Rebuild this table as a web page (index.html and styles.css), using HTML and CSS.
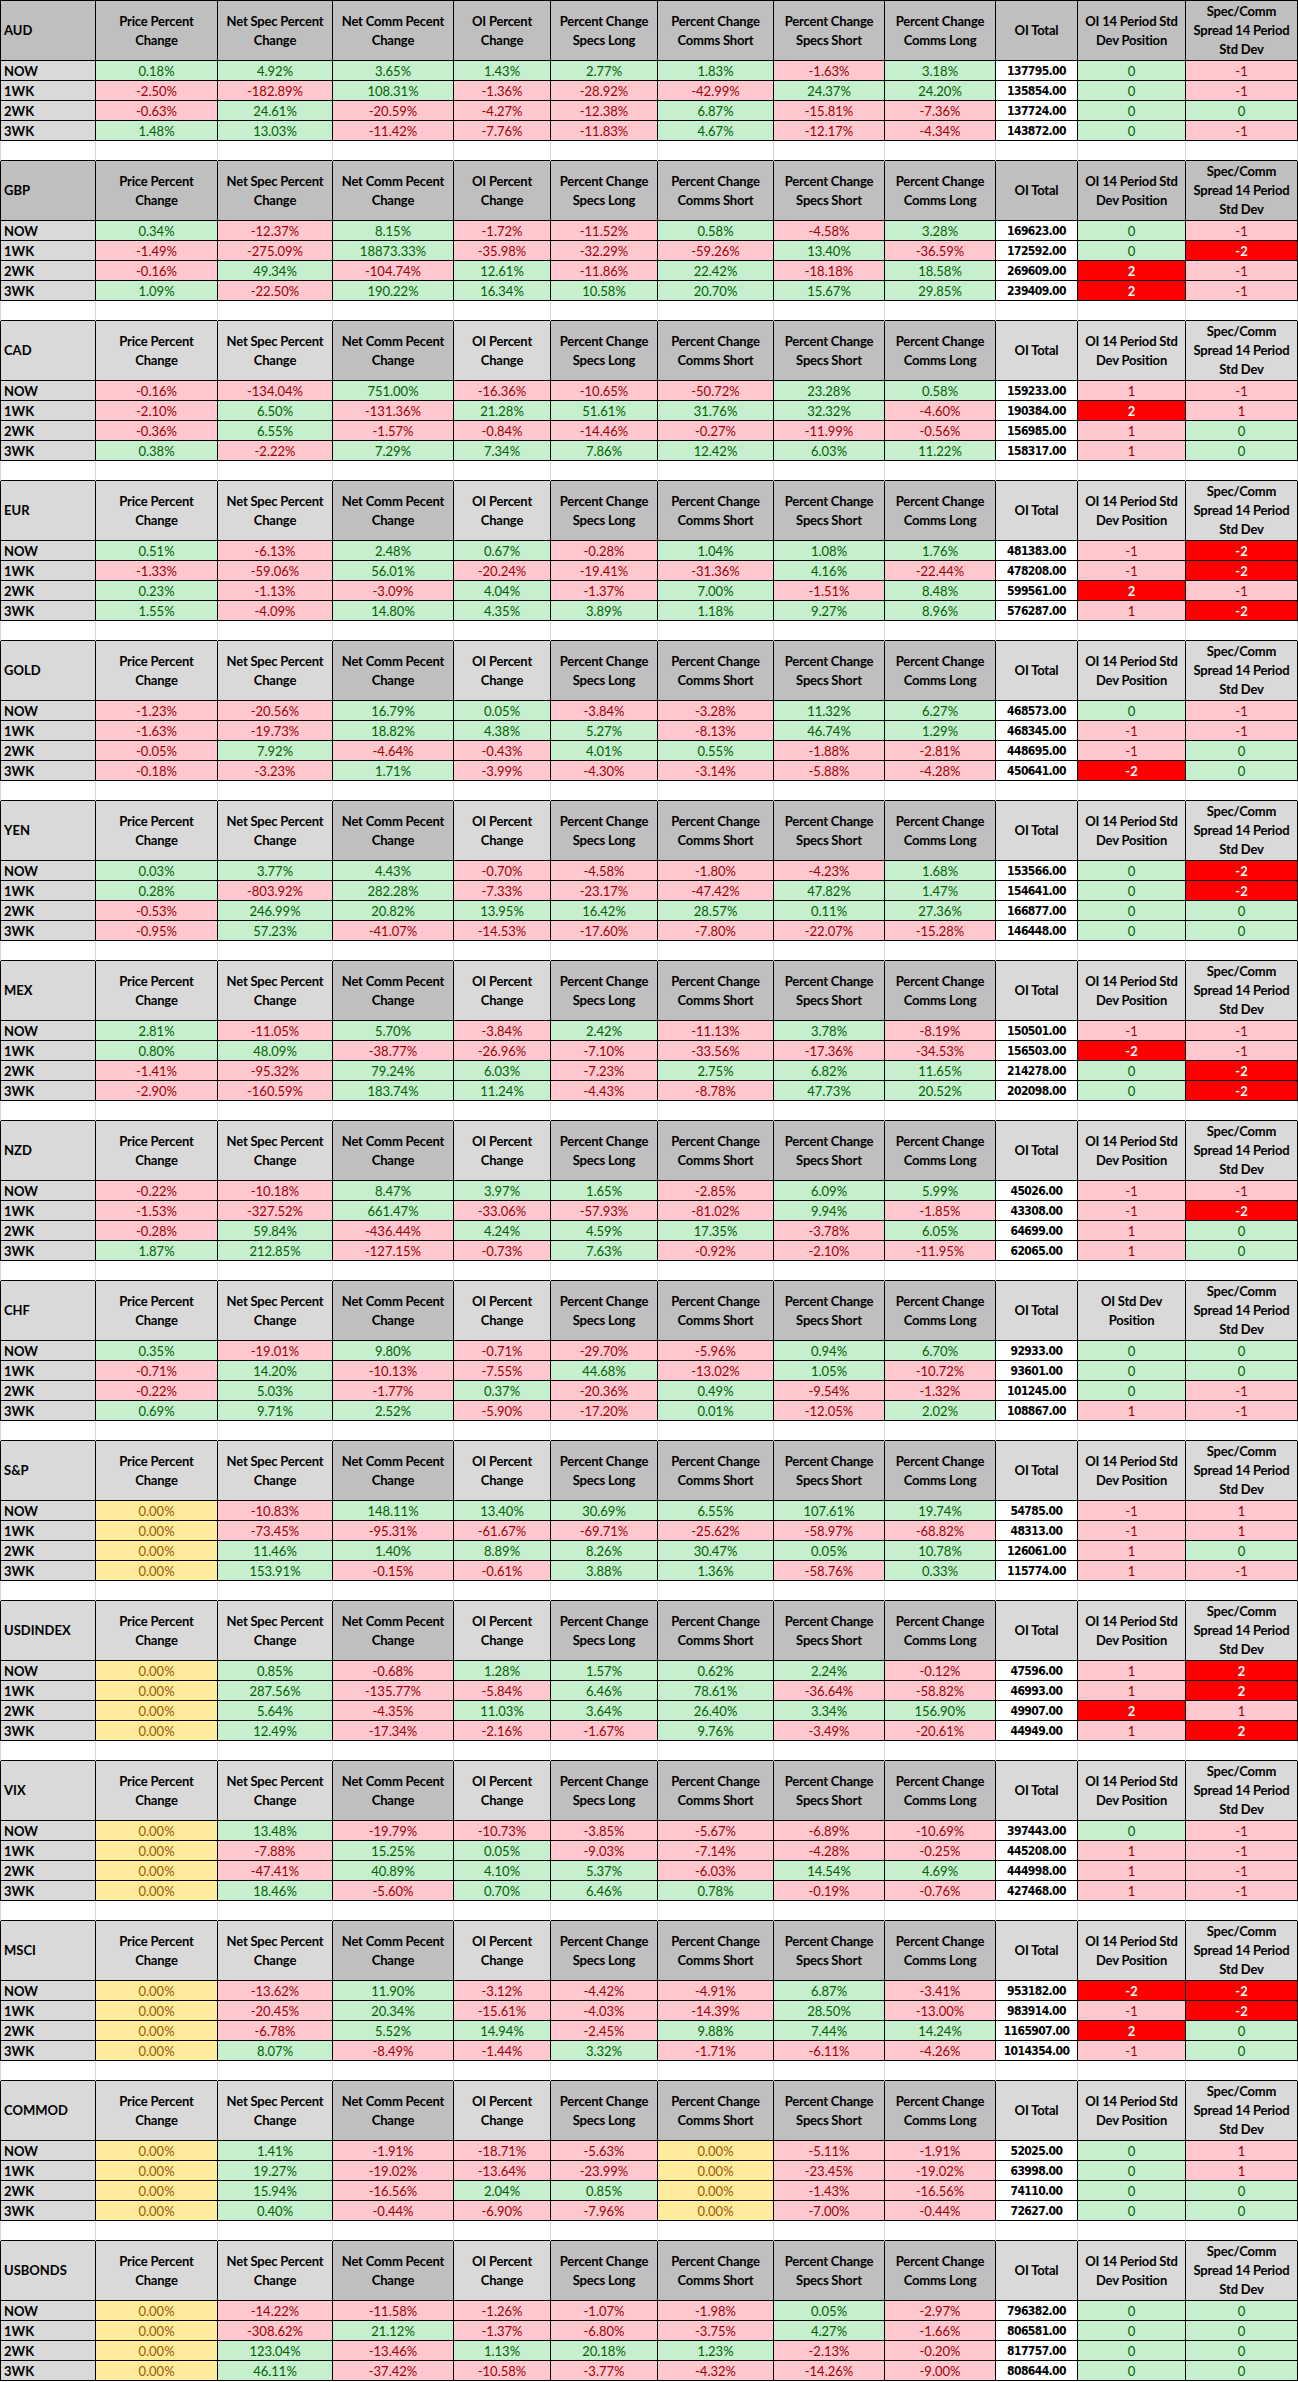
FILE: index.html
```html
<!DOCTYPE html>
<html lang="en">
<head>
<meta charset="utf-8">
<title>COT Percent Change Table</title>
<link rel="stylesheet" href="styles.css">
</head>
<body>
<table class="cot">
<colgroup>
<col class="c0"><col class="c1"><col class="c2"><col class="c3"><col class="c4"><col class="c5"><col class="c6"><col class="c7"><col class="c8"><col class="c9"><col class="c10"><col class="c11">
</colgroup>
<tbody>
<!-- AUD -->
<tr class="hd all"><th class="lb">AUD</th><th>Price Percent<br>Change</th><th>Net Spec Percent<br>Change</th><th>Net Comm Pecent<br>Change</th><th>OI Percent<br>Change</th><th>Percent Change<br>Specs Long</th><th>Percent Change<br>Comms Short</th><th>Percent Change<br>Specs Short</th><th>Percent Change<br>Comms Long</th><th>OI Total</th><th>OI 14 Period Std<br>Dev Position</th><th>Spec/Comm<br>Spread 14 Period<br>Std Dev</th></tr>
<tr class="dr"><td class="l">NOW</td><td class="g">0.18%</td><td class="g">4.92%</td><td class="g">3.65%</td><td class="g">1.43%</td><td class="g">2.77%</td><td class="g">1.83%</td><td class="r">-1.63%</td><td class="g">3.18%</td><td class="n">137795.00</td><td class="g">0</td><td class="r">-1</td></tr>
<tr class="dr"><td class="l">1WK</td><td class="r">-2.50%</td><td class="r">-182.89%</td><td class="g">108.31%</td><td class="r">-1.36%</td><td class="r">-28.92%</td><td class="r">-42.99%</td><td class="g">24.37%</td><td class="g">24.20%</td><td class="n">135854.00</td><td class="g">0</td><td class="r">-1</td></tr>
<tr class="dr"><td class="l">2WK</td><td class="r">-0.63%</td><td class="g">24.61%</td><td class="r">-20.59%</td><td class="r">-4.27%</td><td class="r">-12.38%</td><td class="g">6.87%</td><td class="r">-15.81%</td><td class="r">-7.36%</td><td class="n">137724.00</td><td class="g">0</td><td class="g">0</td></tr>
<tr class="dr"><td class="l">3WK</td><td class="g">1.48%</td><td class="g">13.03%</td><td class="r">-11.42%</td><td class="r">-7.76%</td><td class="r">-11.83%</td><td class="g">4.67%</td><td class="r">-12.17%</td><td class="r">-4.34%</td><td class="n">143872.00</td><td class="g">0</td><td class="r">-1</td></tr>
<tr class="sp"><td></td><td></td><td></td><td></td><td></td><td></td><td></td><td></td><td></td><td></td><td></td><td></td></tr>
<!-- GBP -->
<tr class="hd all"><th class="lb">GBP</th><th>Price Percent<br>Change</th><th>Net Spec Percent<br>Change</th><th>Net Comm Pecent<br>Change</th><th>OI Percent<br>Change</th><th>Percent Change<br>Specs Long</th><th>Percent Change<br>Comms Short</th><th>Percent Change<br>Specs Short</th><th>Percent Change<br>Comms Long</th><th>OI Total</th><th>OI 14 Period Std<br>Dev Position</th><th>Spec/Comm<br>Spread 14 Period<br>Std Dev</th></tr>
<tr class="dr"><td class="l">NOW</td><td class="g">0.34%</td><td class="r">-12.37%</td><td class="g">8.15%</td><td class="r">-1.72%</td><td class="r">-11.52%</td><td class="g">0.58%</td><td class="r">-4.58%</td><td class="g">3.28%</td><td class="n">169623.00</td><td class="g">0</td><td class="r">-1</td></tr>
<tr class="dr"><td class="l">1WK</td><td class="r">-1.49%</td><td class="r">-275.09%</td><td class="g">18873.33%</td><td class="r">-35.98%</td><td class="r">-32.29%</td><td class="r">-59.26%</td><td class="g">13.40%</td><td class="r">-36.59%</td><td class="n">172592.00</td><td class="g">0</td><td class="x">-2</td></tr>
<tr class="dr"><td class="l">2WK</td><td class="r">-0.16%</td><td class="g">49.34%</td><td class="r">-104.74%</td><td class="g">12.61%</td><td class="r">-11.86%</td><td class="g">22.42%</td><td class="r">-18.18%</td><td class="g">18.58%</td><td class="n">269609.00</td><td class="x">2</td><td class="r">-1</td></tr>
<tr class="dr"><td class="l">3WK</td><td class="g">1.09%</td><td class="r">-22.50%</td><td class="g">190.22%</td><td class="g">16.34%</td><td class="g">10.58%</td><td class="g">20.70%</td><td class="g">15.67%</td><td class="g">29.85%</td><td class="n">239409.00</td><td class="x">2</td><td class="r">-1</td></tr>
<tr class="sp"><td></td><td></td><td></td><td></td><td></td><td></td><td></td><td></td><td></td><td></td><td></td><td></td></tr>
<!-- CAD -->
<tr class="hd"><th class="lb">CAD</th><th>Price Percent<br>Change</th><th>Net Spec Percent<br>Change</th><th class="d">Net Comm Pecent<br>Change</th><th>OI Percent<br>Change</th><th class="d">Percent Change<br>Specs Long</th><th class="d">Percent Change<br>Comms Short</th><th class="d">Percent Change<br>Specs Short</th><th class="d">Percent Change<br>Comms Long</th><th>OI Total</th><th>OI 14 Period Std<br>Dev Position</th><th>Spec/Comm<br>Spread 14 Period<br>Std Dev</th></tr>
<tr class="dr"><td class="l">NOW</td><td class="r">-0.16%</td><td class="r">-134.04%</td><td class="g">751.00%</td><td class="r">-16.36%</td><td class="r">-10.65%</td><td class="r">-50.72%</td><td class="g">23.28%</td><td class="g">0.58%</td><td class="n">159233.00</td><td class="r">1</td><td class="r">-1</td></tr>
<tr class="dr"><td class="l">1WK</td><td class="r">-2.10%</td><td class="g">6.50%</td><td class="r">-131.36%</td><td class="g">21.28%</td><td class="g">51.61%</td><td class="g">31.76%</td><td class="g">32.32%</td><td class="r">-4.60%</td><td class="n">190384.00</td><td class="x">2</td><td class="r">1</td></tr>
<tr class="dr"><td class="l">2WK</td><td class="r">-0.36%</td><td class="g">6.55%</td><td class="r">-1.57%</td><td class="r">-0.84%</td><td class="r">-14.46%</td><td class="r">-0.27%</td><td class="r">-11.99%</td><td class="r">-0.56%</td><td class="n">156985.00</td><td class="r">1</td><td class="g">0</td></tr>
<tr class="dr"><td class="l">3WK</td><td class="g">0.38%</td><td class="r">-2.22%</td><td class="g">7.29%</td><td class="g">7.34%</td><td class="g">7.86%</td><td class="g">12.42%</td><td class="g">6.03%</td><td class="g">11.22%</td><td class="n">158317.00</td><td class="r">1</td><td class="g">0</td></tr>
<tr class="sp"><td></td><td></td><td></td><td></td><td></td><td></td><td></td><td></td><td></td><td></td><td></td><td></td></tr>
<!-- EUR -->
<tr class="hd"><th class="lb">EUR</th><th>Price Percent<br>Change</th><th>Net Spec Percent<br>Change</th><th class="d">Net Comm Pecent<br>Change</th><th>OI Percent<br>Change</th><th class="d">Percent Change<br>Specs Long</th><th class="d">Percent Change<br>Comms Short</th><th class="d">Percent Change<br>Specs Short</th><th class="d">Percent Change<br>Comms Long</th><th>OI Total</th><th>OI 14 Period Std<br>Dev Position</th><th>Spec/Comm<br>Spread 14 Period<br>Std Dev</th></tr>
<tr class="dr"><td class="l">NOW</td><td class="g">0.51%</td><td class="r">-6.13%</td><td class="g">2.48%</td><td class="g">0.67%</td><td class="r">-0.28%</td><td class="g">1.04%</td><td class="g">1.08%</td><td class="g">1.76%</td><td class="n">481383.00</td><td class="r">-1</td><td class="x">-2</td></tr>
<tr class="dr"><td class="l">1WK</td><td class="r">-1.33%</td><td class="r">-59.06%</td><td class="g">56.01%</td><td class="r">-20.24%</td><td class="r">-19.41%</td><td class="r">-31.36%</td><td class="g">4.16%</td><td class="r">-22.44%</td><td class="n">478208.00</td><td class="r">-1</td><td class="x">-2</td></tr>
<tr class="dr"><td class="l">2WK</td><td class="g">0.23%</td><td class="r">-1.13%</td><td class="r">-3.09%</td><td class="g">4.04%</td><td class="r">-1.37%</td><td class="g">7.00%</td><td class="r">-1.51%</td><td class="g">8.48%</td><td class="n">599561.00</td><td class="x">2</td><td class="r">-1</td></tr>
<tr class="dr"><td class="l">3WK</td><td class="g">1.55%</td><td class="r">-4.09%</td><td class="g">14.80%</td><td class="g">4.35%</td><td class="g">3.89%</td><td class="g">1.18%</td><td class="g">9.27%</td><td class="g">8.96%</td><td class="n">576287.00</td><td class="r">1</td><td class="x">-2</td></tr>
<tr class="sp"><td></td><td></td><td></td><td></td><td></td><td></td><td></td><td></td><td></td><td></td><td></td><td></td></tr>
<!-- GOLD -->
<tr class="hd"><th class="lb">GOLD</th><th>Price Percent<br>Change</th><th>Net Spec Percent<br>Change</th><th class="d">Net Comm Pecent<br>Change</th><th>OI Percent<br>Change</th><th class="d">Percent Change<br>Specs Long</th><th class="d">Percent Change<br>Comms Short</th><th class="d">Percent Change<br>Specs Short</th><th class="d">Percent Change<br>Comms Long</th><th>OI Total</th><th>OI 14 Period Std<br>Dev Position</th><th>Spec/Comm<br>Spread 14 Period<br>Std Dev</th></tr>
<tr class="dr"><td class="l">NOW</td><td class="r">-1.23%</td><td class="r">-20.56%</td><td class="g">16.79%</td><td class="g">0.05%</td><td class="r">-3.84%</td><td class="r">-3.28%</td><td class="g">11.32%</td><td class="g">6.27%</td><td class="n">468573.00</td><td class="g">0</td><td class="r">-1</td></tr>
<tr class="dr"><td class="l">1WK</td><td class="r">-1.63%</td><td class="r">-19.73%</td><td class="g">18.82%</td><td class="g">4.38%</td><td class="g">5.27%</td><td class="r">-8.13%</td><td class="g">46.74%</td><td class="g">1.29%</td><td class="n">468345.00</td><td class="r">-1</td><td class="r">-1</td></tr>
<tr class="dr"><td class="l">2WK</td><td class="r">-0.05%</td><td class="g">7.92%</td><td class="r">-4.64%</td><td class="r">-0.43%</td><td class="g">4.01%</td><td class="g">0.55%</td><td class="r">-1.88%</td><td class="r">-2.81%</td><td class="n">448695.00</td><td class="r">-1</td><td class="g">0</td></tr>
<tr class="dr"><td class="l">3WK</td><td class="r">-0.18%</td><td class="r">-3.23%</td><td class="g">1.71%</td><td class="r">-3.99%</td><td class="r">-4.30%</td><td class="r">-3.14%</td><td class="r">-5.88%</td><td class="r">-4.28%</td><td class="n">450641.00</td><td class="x">-2</td><td class="g">0</td></tr>
<tr class="sp"><td></td><td></td><td></td><td></td><td></td><td></td><td></td><td></td><td></td><td></td><td></td><td></td></tr>
<!-- YEN -->
<tr class="hd"><th class="lb">YEN</th><th>Price Percent<br>Change</th><th>Net Spec Percent<br>Change</th><th class="d">Net Comm Pecent<br>Change</th><th>OI Percent<br>Change</th><th class="d">Percent Change<br>Specs Long</th><th class="d">Percent Change<br>Comms Short</th><th class="d">Percent Change<br>Specs Short</th><th class="d">Percent Change<br>Comms Long</th><th>OI Total</th><th>OI 14 Period Std<br>Dev Position</th><th>Spec/Comm<br>Spread 14 Period<br>Std Dev</th></tr>
<tr class="dr"><td class="l">NOW</td><td class="g">0.03%</td><td class="g">3.77%</td><td class="g">4.43%</td><td class="r">-0.70%</td><td class="r">-4.58%</td><td class="r">-1.80%</td><td class="r">-4.23%</td><td class="g">1.68%</td><td class="n">153566.00</td><td class="g">0</td><td class="x">-2</td></tr>
<tr class="dr"><td class="l">1WK</td><td class="g">0.28%</td><td class="r">-803.92%</td><td class="g">282.28%</td><td class="r">-7.33%</td><td class="r">-23.17%</td><td class="r">-47.42%</td><td class="g">47.82%</td><td class="g">1.47%</td><td class="n">154641.00</td><td class="g">0</td><td class="x">-2</td></tr>
<tr class="dr"><td class="l">2WK</td><td class="r">-0.53%</td><td class="g">246.99%</td><td class="g">20.82%</td><td class="g">13.95%</td><td class="g">16.42%</td><td class="g">28.57%</td><td class="g">0.11%</td><td class="g">27.36%</td><td class="n">166877.00</td><td class="g">0</td><td class="g">0</td></tr>
<tr class="dr"><td class="l">3WK</td><td class="r">-0.95%</td><td class="g">57.23%</td><td class="r">-41.07%</td><td class="r">-14.53%</td><td class="r">-17.60%</td><td class="r">-7.80%</td><td class="r">-22.07%</td><td class="r">-15.28%</td><td class="n">146448.00</td><td class="g">0</td><td class="g">0</td></tr>
<tr class="sp"><td></td><td></td><td></td><td></td><td></td><td></td><td></td><td></td><td></td><td></td><td></td><td></td></tr>
<!-- MEX -->
<tr class="hd"><th class="lb">MEX</th><th>Price Percent<br>Change</th><th>Net Spec Percent<br>Change</th><th class="d">Net Comm Pecent<br>Change</th><th>OI Percent<br>Change</th><th class="d">Percent Change<br>Specs Long</th><th class="d">Percent Change<br>Comms Short</th><th class="d">Percent Change<br>Specs Short</th><th class="d">Percent Change<br>Comms Long</th><th>OI Total</th><th>OI 14 Period Std<br>Dev Position</th><th>Spec/Comm<br>Spread 14 Period<br>Std Dev</th></tr>
<tr class="dr"><td class="l">NOW</td><td class="g">2.81%</td><td class="r">-11.05%</td><td class="g">5.70%</td><td class="r">-3.84%</td><td class="g">2.42%</td><td class="r">-11.13%</td><td class="g">3.78%</td><td class="r">-8.19%</td><td class="n">150501.00</td><td class="r">-1</td><td class="r">-1</td></tr>
<tr class="dr"><td class="l">1WK</td><td class="g">0.80%</td><td class="g">48.09%</td><td class="r">-38.77%</td><td class="r">-26.96%</td><td class="r">-7.10%</td><td class="r">-33.56%</td><td class="r">-17.36%</td><td class="r">-34.53%</td><td class="n">156503.00</td><td class="x">-2</td><td class="r">-1</td></tr>
<tr class="dr"><td class="l">2WK</td><td class="r">-1.41%</td><td class="r">-95.32%</td><td class="g">79.24%</td><td class="g">6.03%</td><td class="r">-7.23%</td><td class="g">2.75%</td><td class="g">6.82%</td><td class="g">11.65%</td><td class="n">214278.00</td><td class="g">0</td><td class="x">-2</td></tr>
<tr class="dr"><td class="l">3WK</td><td class="r">-2.90%</td><td class="r">-160.59%</td><td class="g">183.74%</td><td class="g">11.24%</td><td class="r">-4.43%</td><td class="r">-8.78%</td><td class="g">47.73%</td><td class="g">20.52%</td><td class="n">202098.00</td><td class="g">0</td><td class="x">-2</td></tr>
<tr class="sp"><td></td><td></td><td></td><td></td><td></td><td></td><td></td><td></td><td></td><td></td><td></td><td></td></tr>
<!-- NZD -->
<tr class="hd"><th class="lb">NZD</th><th>Price Percent<br>Change</th><th>Net Spec Percent<br>Change</th><th class="d">Net Comm Pecent<br>Change</th><th>OI Percent<br>Change</th><th class="d">Percent Change<br>Specs Long</th><th class="d">Percent Change<br>Comms Short</th><th class="d">Percent Change<br>Specs Short</th><th class="d">Percent Change<br>Comms Long</th><th>OI Total</th><th>OI 14 Period Std<br>Dev Position</th><th>Spec/Comm<br>Spread 14 Period<br>Std Dev</th></tr>
<tr class="dr"><td class="l">NOW</td><td class="r">-0.22%</td><td class="r">-10.18%</td><td class="g">8.47%</td><td class="g">3.97%</td><td class="g">1.65%</td><td class="r">-2.85%</td><td class="g">6.09%</td><td class="g">5.99%</td><td class="n">45026.00</td><td class="r">-1</td><td class="r">-1</td></tr>
<tr class="dr"><td class="l">1WK</td><td class="r">-1.53%</td><td class="r">-327.52%</td><td class="g">661.47%</td><td class="r">-33.06%</td><td class="r">-57.93%</td><td class="r">-81.02%</td><td class="g">9.94%</td><td class="r">-1.85%</td><td class="n">43308.00</td><td class="r">-1</td><td class="x">-2</td></tr>
<tr class="dr"><td class="l">2WK</td><td class="r">-0.28%</td><td class="g">59.84%</td><td class="r">-436.44%</td><td class="g">4.24%</td><td class="g">4.59%</td><td class="g">17.35%</td><td class="r">-3.78%</td><td class="g">6.05%</td><td class="n">64699.00</td><td class="r">1</td><td class="g">0</td></tr>
<tr class="dr"><td class="l">3WK</td><td class="g">1.87%</td><td class="g">212.85%</td><td class="r">-127.15%</td><td class="r">-0.73%</td><td class="g">7.63%</td><td class="r">-0.92%</td><td class="r">-2.10%</td><td class="r">-11.95%</td><td class="n">62065.00</td><td class="r">1</td><td class="g">0</td></tr>
<tr class="sp"><td></td><td></td><td></td><td></td><td></td><td></td><td></td><td></td><td></td><td></td><td></td><td></td></tr>
<!-- CHF -->
<tr class="hd"><th class="lb">CHF</th><th>Price Percent<br>Change</th><th>Net Spec Percent<br>Change</th><th class="d">Net Comm Pecent<br>Change</th><th>OI Percent<br>Change</th><th class="d">Percent Change<br>Specs Long</th><th class="d">Percent Change<br>Comms Short</th><th class="d">Percent Change<br>Specs Short</th><th class="d">Percent Change<br>Comms Long</th><th>OI Total</th><th>OI Std Dev<br>Position</th><th>Spec/Comm<br>Spread 14 Period<br>Std Dev</th></tr>
<tr class="dr"><td class="l">NOW</td><td class="g">0.35%</td><td class="r">-19.01%</td><td class="g">9.80%</td><td class="r">-0.71%</td><td class="r">-29.70%</td><td class="r">-5.96%</td><td class="g">0.94%</td><td class="g">6.70%</td><td class="n">92933.00</td><td class="g">0</td><td class="g">0</td></tr>
<tr class="dr"><td class="l">1WK</td><td class="r">-0.71%</td><td class="g">14.20%</td><td class="r">-10.13%</td><td class="r">-7.55%</td><td class="g">44.68%</td><td class="r">-13.02%</td><td class="g">1.05%</td><td class="r">-10.72%</td><td class="n">93601.00</td><td class="g">0</td><td class="g">0</td></tr>
<tr class="dr"><td class="l">2WK</td><td class="r">-0.22%</td><td class="g">5.03%</td><td class="r">-1.77%</td><td class="g">0.37%</td><td class="r">-20.36%</td><td class="g">0.49%</td><td class="r">-9.54%</td><td class="r">-1.32%</td><td class="n">101245.00</td><td class="g">0</td><td class="r">-1</td></tr>
<tr class="dr"><td class="l">3WK</td><td class="g">0.69%</td><td class="g">9.71%</td><td class="g">2.52%</td><td class="r">-5.90%</td><td class="r">-17.20%</td><td class="g">0.01%</td><td class="r">-12.05%</td><td class="g">2.02%</td><td class="n">108867.00</td><td class="r">1</td><td class="r">-1</td></tr>
<tr class="sp"><td></td><td></td><td></td><td></td><td></td><td></td><td></td><td></td><td></td><td></td><td></td><td></td></tr>
<!-- S&P -->
<tr class="hd"><th class="lb">S&amp;P</th><th>Price Percent<br>Change</th><th>Net Spec Percent<br>Change</th><th class="d">Net Comm Pecent<br>Change</th><th>OI Percent<br>Change</th><th class="d">Percent Change<br>Specs Long</th><th class="d">Percent Change<br>Comms Short</th><th class="d">Percent Change<br>Specs Short</th><th class="d">Percent Change<br>Comms Long</th><th>OI Total</th><th>OI 14 Period Std<br>Dev Position</th><th>Spec/Comm<br>Spread 14 Period<br>Std Dev</th></tr>
<tr class="dr"><td class="l">NOW</td><td class="y">0.00%</td><td class="r">-10.83%</td><td class="g">148.11%</td><td class="g">13.40%</td><td class="g">30.69%</td><td class="g">6.55%</td><td class="g">107.61%</td><td class="g">19.74%</td><td class="n">54785.00</td><td class="r">-1</td><td class="r">1</td></tr>
<tr class="dr"><td class="l">1WK</td><td class="y">0.00%</td><td class="r">-73.45%</td><td class="r">-95.31%</td><td class="r">-61.67%</td><td class="r">-69.71%</td><td class="r">-25.62%</td><td class="r">-58.97%</td><td class="r">-68.82%</td><td class="n">48313.00</td><td class="r">-1</td><td class="r">1</td></tr>
<tr class="dr"><td class="l">2WK</td><td class="y">0.00%</td><td class="g">11.46%</td><td class="g">1.40%</td><td class="g">8.89%</td><td class="g">8.26%</td><td class="g">30.47%</td><td class="g">0.05%</td><td class="g">10.78%</td><td class="n">126061.00</td><td class="r">1</td><td class="g">0</td></tr>
<tr class="dr"><td class="l">3WK</td><td class="y">0.00%</td><td class="g">153.91%</td><td class="r">-0.15%</td><td class="r">-0.61%</td><td class="g">3.88%</td><td class="g">1.36%</td><td class="r">-58.76%</td><td class="g">0.33%</td><td class="n">115774.00</td><td class="r">1</td><td class="r">-1</td></tr>
<tr class="sp"><td></td><td></td><td></td><td></td><td></td><td></td><td></td><td></td><td></td><td></td><td></td><td></td></tr>
<!-- USDINDEX -->
<tr class="hd"><th class="lb">USDINDEX</th><th>Price Percent<br>Change</th><th>Net Spec Percent<br>Change</th><th class="d">Net Comm Pecent<br>Change</th><th>OI Percent<br>Change</th><th class="d">Percent Change<br>Specs Long</th><th class="d">Percent Change<br>Comms Short</th><th class="d">Percent Change<br>Specs Short</th><th class="d">Percent Change<br>Comms Long</th><th>OI Total</th><th>OI 14 Period Std<br>Dev Position</th><th>Spec/Comm<br>Spread 14 Period<br>Std Dev</th></tr>
<tr class="dr"><td class="l">NOW</td><td class="y">0.00%</td><td class="g">0.85%</td><td class="r">-0.68%</td><td class="g">1.28%</td><td class="g">1.57%</td><td class="g">0.62%</td><td class="g">2.24%</td><td class="r">-0.12%</td><td class="n">47596.00</td><td class="r">1</td><td class="x">2</td></tr>
<tr class="dr"><td class="l">1WK</td><td class="y">0.00%</td><td class="g">287.56%</td><td class="r">-135.77%</td><td class="r">-5.84%</td><td class="g">6.46%</td><td class="g">78.61%</td><td class="r">-36.64%</td><td class="r">-58.82%</td><td class="n">46993.00</td><td class="r">1</td><td class="x">2</td></tr>
<tr class="dr"><td class="l">2WK</td><td class="y">0.00%</td><td class="g">5.64%</td><td class="r">-4.35%</td><td class="g">11.03%</td><td class="g">3.64%</td><td class="g">26.40%</td><td class="g">3.34%</td><td class="g">156.90%</td><td class="n">49907.00</td><td class="x">2</td><td class="r">1</td></tr>
<tr class="dr"><td class="l">3WK</td><td class="y">0.00%</td><td class="g">12.49%</td><td class="r">-17.34%</td><td class="r">-2.16%</td><td class="r">-1.67%</td><td class="g">9.76%</td><td class="r">-3.49%</td><td class="r">-20.61%</td><td class="n">44949.00</td><td class="r">1</td><td class="x">2</td></tr>
<tr class="sp"><td></td><td></td><td></td><td></td><td></td><td></td><td></td><td></td><td></td><td></td><td></td><td></td></tr>
<!-- VIX -->
<tr class="hd"><th class="lb">VIX</th><th>Price Percent<br>Change</th><th>Net Spec Percent<br>Change</th><th class="d">Net Comm Pecent<br>Change</th><th>OI Percent<br>Change</th><th class="d">Percent Change<br>Specs Long</th><th class="d">Percent Change<br>Comms Short</th><th class="d">Percent Change<br>Specs Short</th><th class="d">Percent Change<br>Comms Long</th><th>OI Total</th><th>OI 14 Period Std<br>Dev Position</th><th>Spec/Comm<br>Spread 14 Period<br>Std Dev</th></tr>
<tr class="dr"><td class="l">NOW</td><td class="y">0.00%</td><td class="g">13.48%</td><td class="r">-19.79%</td><td class="r">-10.73%</td><td class="r">-3.85%</td><td class="r">-5.67%</td><td class="r">-6.89%</td><td class="r">-10.69%</td><td class="n">397443.00</td><td class="g">0</td><td class="r">-1</td></tr>
<tr class="dr"><td class="l">1WK</td><td class="y">0.00%</td><td class="r">-7.88%</td><td class="g">15.25%</td><td class="g">0.05%</td><td class="r">-9.03%</td><td class="r">-7.14%</td><td class="r">-4.28%</td><td class="r">-0.25%</td><td class="n">445208.00</td><td class="r">1</td><td class="r">-1</td></tr>
<tr class="dr"><td class="l">2WK</td><td class="y">0.00%</td><td class="r">-47.41%</td><td class="g">40.89%</td><td class="g">4.10%</td><td class="g">5.37%</td><td class="r">-6.03%</td><td class="g">14.54%</td><td class="g">4.69%</td><td class="n">444998.00</td><td class="r">1</td><td class="r">-1</td></tr>
<tr class="dr"><td class="l">3WK</td><td class="y">0.00%</td><td class="g">18.46%</td><td class="r">-5.60%</td><td class="g">0.70%</td><td class="g">6.46%</td><td class="g">0.78%</td><td class="r">-0.19%</td><td class="r">-0.76%</td><td class="n">427468.00</td><td class="r">1</td><td class="r">-1</td></tr>
<tr class="sp"><td></td><td></td><td></td><td></td><td></td><td></td><td></td><td></td><td></td><td></td><td></td><td></td></tr>
<!-- MSCI -->
<tr class="hd"><th class="lb">MSCI</th><th>Price Percent<br>Change</th><th>Net Spec Percent<br>Change</th><th class="d">Net Comm Pecent<br>Change</th><th>OI Percent<br>Change</th><th class="d">Percent Change<br>Specs Long</th><th class="d">Percent Change<br>Comms Short</th><th class="d">Percent Change<br>Specs Short</th><th class="d">Percent Change<br>Comms Long</th><th>OI Total</th><th>OI 14 Period Std<br>Dev Position</th><th>Spec/Comm<br>Spread 14 Period<br>Std Dev</th></tr>
<tr class="dr"><td class="l">NOW</td><td class="y">0.00%</td><td class="r">-13.62%</td><td class="g">11.90%</td><td class="r">-3.12%</td><td class="r">-4.42%</td><td class="r">-4.91%</td><td class="g">6.87%</td><td class="r">-3.41%</td><td class="n">953182.00</td><td class="x">-2</td><td class="x">-2</td></tr>
<tr class="dr"><td class="l">1WK</td><td class="y">0.00%</td><td class="r">-20.45%</td><td class="g">20.34%</td><td class="r">-15.61%</td><td class="r">-4.03%</td><td class="r">-14.39%</td><td class="g">28.50%</td><td class="r">-13.00%</td><td class="n">983914.00</td><td class="r">-1</td><td class="x">-2</td></tr>
<tr class="dr"><td class="l">2WK</td><td class="y">0.00%</td><td class="r">-6.78%</td><td class="g">5.52%</td><td class="g">14.94%</td><td class="r">-2.45%</td><td class="g">9.88%</td><td class="g">7.44%</td><td class="g">14.24%</td><td class="n">1165907.00</td><td class="x">2</td><td class="g">0</td></tr>
<tr class="dr"><td class="l">3WK</td><td class="y">0.00%</td><td class="g">8.07%</td><td class="r">-8.49%</td><td class="r">-1.44%</td><td class="g">3.32%</td><td class="r">-1.71%</td><td class="r">-6.11%</td><td class="r">-4.26%</td><td class="n">1014354.00</td><td class="r">-1</td><td class="g">0</td></tr>
<tr class="sp"><td></td><td></td><td></td><td></td><td></td><td></td><td></td><td></td><td></td><td></td><td></td><td></td></tr>
<!-- COMMOD -->
<tr class="hd"><th class="lb">COMMOD</th><th>Price Percent<br>Change</th><th>Net Spec Percent<br>Change</th><th class="d">Net Comm Pecent<br>Change</th><th>OI Percent<br>Change</th><th class="d">Percent Change<br>Specs Long</th><th class="d">Percent Change<br>Comms Short</th><th class="d">Percent Change<br>Specs Short</th><th class="d">Percent Change<br>Comms Long</th><th>OI Total</th><th>OI 14 Period Std<br>Dev Position</th><th>Spec/Comm<br>Spread 14 Period<br>Std Dev</th></tr>
<tr class="dr"><td class="l">NOW</td><td class="y">0.00%</td><td class="g">1.41%</td><td class="r">-1.91%</td><td class="r">-18.71%</td><td class="r">-5.63%</td><td class="y">0.00%</td><td class="r">-5.11%</td><td class="r">-1.91%</td><td class="n">52025.00</td><td class="g">0</td><td class="r">1</td></tr>
<tr class="dr"><td class="l">1WK</td><td class="y">0.00%</td><td class="g">19.27%</td><td class="r">-19.02%</td><td class="r">-13.64%</td><td class="r">-23.99%</td><td class="y">0.00%</td><td class="r">-23.45%</td><td class="r">-19.02%</td><td class="n">63998.00</td><td class="g">0</td><td class="r">1</td></tr>
<tr class="dr"><td class="l">2WK</td><td class="y">0.00%</td><td class="g">15.94%</td><td class="r">-16.56%</td><td class="g">2.04%</td><td class="g">0.85%</td><td class="y">0.00%</td><td class="r">-1.43%</td><td class="r">-16.56%</td><td class="n">74110.00</td><td class="g">0</td><td class="g">0</td></tr>
<tr class="dr"><td class="l">3WK</td><td class="y">0.00%</td><td class="g">0.40%</td><td class="r">-0.44%</td><td class="r">-6.90%</td><td class="r">-7.96%</td><td class="y">0.00%</td><td class="r">-7.00%</td><td class="r">-0.44%</td><td class="n">72627.00</td><td class="g">0</td><td class="g">0</td></tr>
<tr class="sp"><td></td><td></td><td></td><td></td><td></td><td></td><td></td><td></td><td></td><td></td><td></td><td></td></tr>
<!-- USBONDS -->
<tr class="hd"><th class="lb">USBONDS</th><th>Price Percent<br>Change</th><th>Net Spec Percent<br>Change</th><th class="d">Net Comm Pecent<br>Change</th><th>OI Percent<br>Change</th><th class="d">Percent Change<br>Specs Long</th><th class="d">Percent Change<br>Comms Short</th><th class="d">Percent Change<br>Specs Short</th><th class="d">Percent Change<br>Comms Long</th><th>OI Total</th><th>OI 14 Period Std<br>Dev Position</th><th>Spec/Comm<br>Spread 14 Period<br>Std Dev</th></tr>
<tr class="dr"><td class="l">NOW</td><td class="y">0.00%</td><td class="r">-14.22%</td><td class="r">-11.58%</td><td class="r">-1.26%</td><td class="r">-1.07%</td><td class="r">-1.98%</td><td class="g">0.05%</td><td class="r">-2.97%</td><td class="n">796382.00</td><td class="g">0</td><td class="g">0</td></tr>
<tr class="dr"><td class="l">1WK</td><td class="y">0.00%</td><td class="r">-308.62%</td><td class="g">21.12%</td><td class="r">-1.37%</td><td class="r">-6.80%</td><td class="r">-3.75%</td><td class="g">4.27%</td><td class="r">-1.66%</td><td class="n">806581.00</td><td class="g">0</td><td class="g">0</td></tr>
<tr class="dr"><td class="l">2WK</td><td class="y">0.00%</td><td class="g">123.04%</td><td class="r">-13.46%</td><td class="g">1.13%</td><td class="g">20.18%</td><td class="g">1.23%</td><td class="r">-2.13%</td><td class="r">-0.20%</td><td class="n">817757.00</td><td class="g">0</td><td class="g">0</td></tr>
<tr class="dr"><td class="l">3WK</td><td class="y">0.00%</td><td class="g">46.11%</td><td class="r">-37.42%</td><td class="r">-10.58%</td><td class="r">-3.77%</td><td class="r">-4.32%</td><td class="r">-14.26%</td><td class="r">-9.00%</td><td class="n">808644.00</td><td class="g">0</td><td class="g">0</td></tr>
</tbody>
</table>
</body>
</html>
```

FILE: styles.css
```css
html, body {
  margin: 0;
  padding: 0;
  background: #ffffff;
}

.cot {
  border-collapse: collapse;
  table-layout: fixed;
  font-family: Lato, "Open Sans", sans-serif;
  font-size: 13px;
  color: #000000;
}

.c0 { width: 95px; }
.c1 { width: 122px; }
.c2 { width: 115px; }
.c3 { width: 121px; }
.c4 { width: 97px; }
.c5 { width: 107px; }
.c6 { width: 116px; }
.c7 { width: 111px; }
.c8 { width: 111px; }
.c9 { width: 82px; }
.c10 { width: 108px; }
.c11 { width: 112px; }

.cot th,
.cot td {
  padding: 0;
  border: 1px solid #000000;
  text-align: center;
  vertical-align: middle;
  white-space: nowrap;
  overflow: hidden;
}

.hd {
  height: 60px;
}

.hd th {
  background: #d9d9d9;
  font-weight: bold;
  line-height: 19px;
  font-size: 13px;
  letter-spacing: -0.2px;
}

.hd th.d,
.hd.all th {
  background: #bfbfbf;
}

.hd th.lb {
  text-align: left;
  padding-left: 3px;
  letter-spacing: 0;
}

.dr {
  height: 20px;
}

.dr td {
  line-height: 18px;
}

.dr td.l {
  background: #d9d9d9;
  text-align: left;
  padding-left: 3px;
  font-weight: bold;
}

.g {
  background: #c6efce;
  color: #006100;
}

.r {
  background: #ffc7ce;
  color: #9c0006;
}

.y {
  background: #ffeb9c;
  color: #9c5700;
}

.x {
  background: #ff0000;
  color: #ffffff;
  font-weight: bold;
}

.n {
  background: #ffffff;
  color: #000000;
  font-family: "DejaVu Sans Condensed", "DejaVu Sans", sans-serif;
  font-stretch: condensed;
  font-weight: bold;
  font-size: 12px;
  letter-spacing: -0.6px;
}

.sp {
  height: 20px;
}

.sp td {
  border-top: none;
  border-bottom: none;
  border-left: 1px solid #d4d4d4;
  border-right: 1px solid #d4d4d4;
  background: #ffffff;
}
```
